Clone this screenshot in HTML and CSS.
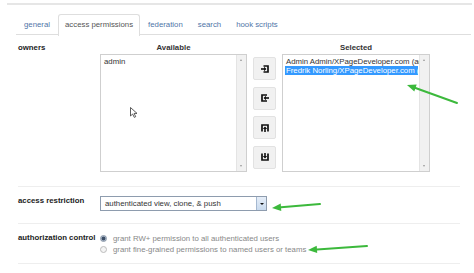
FILE: index.html
```html
<!DOCTYPE html>
<html>
<head>
<meta charset="utf-8">
<link rel="stylesheet" href="styles.css">
</head>
<body>
<div class="page">
  <div class="topline"></div>
  <ul class="tabs">
    <li class="tab">general</li>
    <li class="tab active">access permissions</li>
    <li class="tab">federation</li>
    <li class="tab">search</li>
    <li class="tab">hook scripts</li>
  </ul>

  <div class="section owners">
    <div class="label">owners</div>
    <div class="picker">
      <div class="col">
        <div class="heading">Available</div>
        <div class="listbox">
          <div class="items">
            <div class="opt">admin</div>
          </div>
          <div class="scroll"><span class="up"></span><span class="down"></span></div>
          <svg class="cursor" width="9" height="11" viewBox="0 0 9 11"><path d="M0.5 0.5 L0.5 9 L2.6 7 L4.3 10.4 L5.7 9.7 L4.1 6.4 L7 6.4 Z" fill="#fff" stroke="#333" stroke-width="0.8" stroke-linejoin="round"/></svg>
        </div>
      </div>
      <div class="buttons">
        <div class="btn"><svg width="8" height="8" viewBox="0 0 8 8"><path d="M2.5 1 H7 V7 H2.5" fill="none" stroke="#111" stroke-width="1.7"/><path d="M0 4 H4.5" stroke="#111" stroke-width="1.6"/><path d="M3 1.8 L5.4 4 L3 6.2 Z" fill="#111"/></svg></div>
        <div class="btn"><svg width="8" height="8" viewBox="0 0 8 8"><path d="M6 1 H1 V7 H6" fill="none" stroke="#111" stroke-width="1.7"/><path d="M8 4 H3.5" stroke="#111" stroke-width="1.6"/><path d="M5 1.8 L2.6 4 L5 6.2 Z" fill="#111"/></svg></div>
        <div class="btn"><svg width="8" height="8" viewBox="0 0 8 8"><path d="M1 7.5 V1 H7 V7.5" fill="none" stroke="#111" stroke-width="1.7"/><path d="M4 8 V3.5" stroke="#111" stroke-width="1.6"/><path d="M1.8 5 L4 2.6 L6.2 5 Z" fill="#111"/></svg></div>
        <div class="btn"><svg width="8" height="8" viewBox="0 0 8 8"><path d="M1 0.5 V7 H7 V0.5" fill="none" stroke="#111" stroke-width="1.7"/><path d="M4 0 V4.5" stroke="#111" stroke-width="1.6"/><path d="M1.8 3 L4 5.4 L6.2 3 Z" fill="#111"/></svg></div>
      </div>
      <div class="col">
        <div class="heading">Selected</div>
        <div class="listbox wide">
          <div class="items">
            <div class="opt">Admin Admin/XPageDeveloper.com (ad</div>
            <div class="opt sel">Fredrik Norling/XPageDeveloper.com (</div>
          </div>
          <div class="scroll"><span class="up"></span><span class="down"></span></div>
        </div>
      </div>
    </div>
  </div>

  <div class="section restriction">
    <div class="label">access restriction</div>
    <div class="select">
      <span class="select-text">authenticated view, clone, &amp; push</span>
      <span class="select-btn"><span class="tri"></span></span>
    </div>
  </div>

  <div class="section authz">
    <div class="label">authorization control</div>
    <div class="radios">
      <div class="radio-row"><span class="radio checked"></span><span>grant RW+ permission to all authenticated users</span></div>
      <div class="radio-row"><span class="radio"></span><span>grant fine-grained permissions to named users or teams</span></div>
    </div>
  </div>

  <svg class="annotations" width="474" height="273" viewBox="0 0 474 273">
    <g stroke="#3cb93c" stroke-width="2" stroke-linecap="round" fill="#3cb93c">
      <line x1="457" y1="100" x2="415.5" y2="85"/>
      <path d="M407 82 L416.7 81.6 L414.3 88.5 Z" stroke="none"/>
      <line x1="320" y1="201" x2="281" y2="204.2"/>
      <path d="M272 205 L280.7 200.6 L281.3 207.9 Z" stroke="none"/>
      <line x1="367" y1="243" x2="317" y2="246.4"/>
      <path d="M308 247 L316.7 242.8 L317.2 250 Z" stroke="none"/>
    </g>
  </svg>
</div>
</body>
</html>
```

FILE: styles.css
```css
* { box-sizing: border-box; }
html, body { margin: 0; padding: 0; background: #fff; }
body {
  font-family: "Liberation Sans", Arial, sans-serif;
  font-size: 7.8px;
  color: #333;
  width: 474px;
  height: 273px;
  overflow: hidden;
}
.page { position: relative; width: 474px; height: 273px; }

.topline {
  margin: 3px 2px 0 7px;
  height: 2px;
  background: #e6e6e6;
}

.tabs {
  list-style: none;
  display: flex;
  margin: 9px 3px 0 16px;
  padding: 0 0 0 1px;
  height: 21px;
  border-bottom: 1px solid #dedede;
}
.tab {
  padding: 0 6px;
  margin-right: 1px;
  line-height: 20px;
  height: 21px;
  border: 1px solid transparent;
  border-bottom: none;
  color: #5075a8;
}
.tab.active {
  border-color: #dedede;
  border-radius: 3px 3px 0 0;
  background: #fff;
  color: #555;
  margin-bottom: -1px;
  height: 22px;
}

.section {
  display: flex;
  margin: 0 14px 0 18px;
  border-bottom: 1px solid #eeeeee;
}
.label {
  width: 82px;
  flex: none;
  font-weight: bold;
  color: #222;
  line-height: 10px;
}

.owners { padding: 8px 0 14px; }
.picker { display: flex; gap: 6px; }
.col { display: flex; flex-direction: column; }
.heading {
  text-align: center;
  font-weight: bold;
  color: #333;
  line-height: 10px;
  margin-bottom: 1px;
}
.listbox {
  position: relative;
  display: flex;
  width: 147px;
  height: 118px;
  border: 1px solid #cfcfcf;
  background: #fff;
}
.listbox.wide { width: 148px; }
.items {
  flex: 1;
  min-width: 0;
  padding: 2px 1px 2px 2px;
}
.opt {
  white-space: nowrap;
  line-height: 9px;
  height: 9px;
  padding: 0 1px;
  color: #333;
}
.opt.sel { background: #3399ff; color: #fff; }
.scroll {
  position: relative;
  width: 10px;
  flex: none;
  background: #f1f1f1;
  border-left: 1px solid #e4e4e4;
}
.scroll .up, .scroll .down {
  position: absolute;
  left: 3px;
  width: 0; height: 0;
  border-left: 1.5px solid transparent;
  border-right: 1.5px solid transparent;
}
.scroll .up { top: 4px; border-bottom: 2px solid #999; }
.scroll .down { bottom: 4px; border-top: 2px solid #999; }
.cursor { position: absolute; left: 29px; top: 52px; }

.buttons {
  display: flex;
  flex-direction: column;
  gap: 6.5px;
  padding-top: 14px;
}
.btn {
  width: 23px;
  height: 23px;
  border: 1px solid #e2e2e2;
  border-radius: 2px;
  background: #f1f1f1;
  display: flex;
  align-items: center;
  justify-content: center;
}
.btn svg { display: block; }

.restriction { padding: 9px 0 12px; }
.select {
  display: flex;
  width: 167px;
  height: 15px;
  border: 1px solid #8e9cae;
  background: #fff;
}
.select-text {
  flex: 1;
  padding-left: 4px;
  line-height: 13px;
  color: #333;
}
.select-btn {
  width: 10px;
  flex: none;
  background: linear-gradient(#e6eef8, #c9daee);
  border-left: 1px solid #a5b8d0;
  display: flex;
  align-items: center;
  justify-content: center;
}
.tri {
  width: 0; height: 0;
  border-left: 2px solid transparent;
  border-right: 2px solid transparent;
  border-top: 2.5px solid #111;
}

.authz { padding: 9px 0 8px; }
.radios { display: flex; flex-direction: column; }
.radio-row {
  display: flex;
  align-items: center;
  gap: 6px;
  height: 11px;
  color: #888;
}
.radio {
  width: 7px;
  height: 7px;
  border-radius: 50%;
  border: 1px solid #bcbcbc;
  background: #f4f4f4;
  flex: none;
}
.radio.checked {
  border-color: #8a97a8;
  background: radial-gradient(circle, #3d4e66 0 1.6px, #a8b6c8 2.2px);
}

.annotations { position: absolute; left: 0; top: 0; pointer-events: none; }
```
